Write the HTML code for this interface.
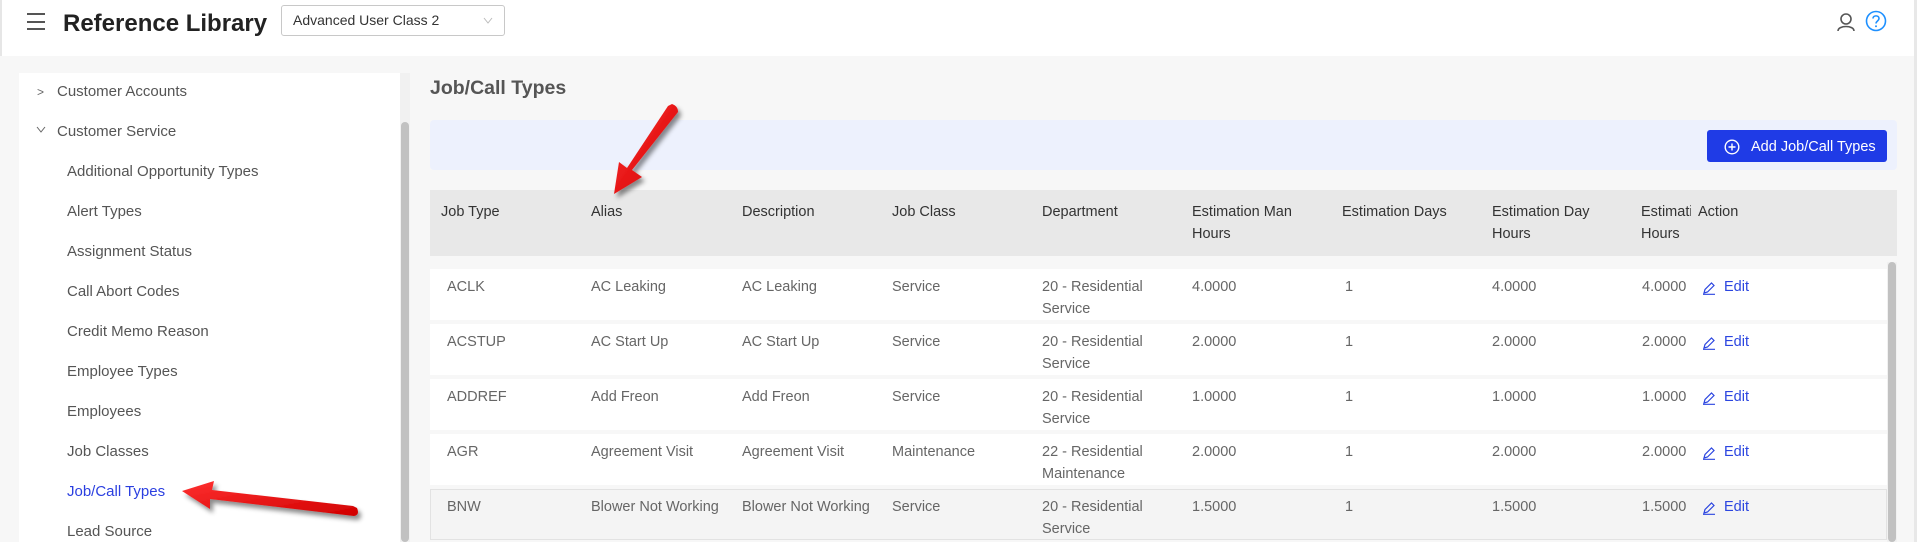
<!DOCTYPE html>
<html><head><meta charset="utf-8">
<style>
*{margin:0;padding:0;box-sizing:border-box}
body{width:1917px;height:542px;overflow:hidden;background:#f7f7f7;font-family:"Liberation Sans",Arial,sans-serif;position:relative}
.a{position:absolute;white-space:nowrap}
#hdr{position:absolute;left:0;top:0;width:1914px;height:56px;background:#fff;border-left:2px solid #e6e6e6}
.side{position:absolute;left:19px;top:73px;width:381px;height:469px;background:#fff}
.si{position:absolute;font-size:15px;color:#555;line-height:18px}
.th{position:absolute;font-size:14.5px;color:#333;line-height:22px}
.row{position:absolute;left:430px;width:1457px;height:51px;background:#fff}
.td{position:absolute;font-size:14.5px;color:#666;line-height:22px;white-space:nowrap}
.ed{position:absolute;font-size:14.5px;color:#2b45e0;line-height:22px}
</style></head><body>
<div id="hdr">
 <div class="a" style="left:25px;top:13px;width:18px;height:2px;background:#555"></div>
 <div class="a" style="left:25px;top:21px;width:18px;height:2px;background:#555"></div>
 <div class="a" style="left:25px;top:28px;width:18px;height:2px;background:#555"></div>
 <div class="a" style="left:61px;top:9px;font-size:24px;font-weight:bold;color:#222;line-height:30px">Reference Library</div>
 <div class="a" style="left:279px;top:5px;width:224px;height:31px;border:1px solid #c8c8c8;border-radius:3px"></div>
 <div class="a" style="left:291px;top:12px;font-size:14px;color:#333">Advanced User Class 2</div>
 <svg class="a" style="left:481px;top:17px" width="10" height="8"><path d="M1 1 L5 6 L9 1" fill="none" stroke="#bbb" stroke-width="1"/></svg>
 <svg class="a" style="left:1834px;top:12px" width="20" height="20"><circle cx="10" cy="7" r="5" fill="none" stroke="#555" stroke-width="1.6"/><path d="M2 19 C2 13 18 13 18 19" fill="none" stroke="#555" stroke-width="1.6"/></svg>
 <svg class="a" style="left:1863px;top:10px" width="22" height="22"><circle cx="11" cy="11" r="9.5" fill="none" stroke="#1e90ff" stroke-width="1.6"/><path d="M8 8.5 C8 5 14 5 14 8.5 C14 11 11 11 11 13.5" fill="none" stroke="#1e90ff" stroke-width="1.6"/><circle cx="11" cy="16.3" r="1" fill="#1e90ff"/></svg>
</div>
<div class="a" style="left:1914px;top:0;width:3px;height:542px;background:#e8e8e8"></div>

<div class="side"></div>
<div class="a" style="left:400px;top:73px;width:10px;height:469px;background:#f1f1f1"></div>
<div class="a" style="left:401px;top:122px;width:8px;height:420px;background:#c1c1c1;border-radius:4px"></div>
<div class="si" style="left:37px;top:83px;font-size:12px;color:#666">&gt;</div>
<div class="si" style="left:57px;top:83px">Customer Accounts</div>
<svg class="a" style="left:36px;top:126px" width="10" height="8"><path d="M1 1 L5 6 L9 1" fill="none" stroke="#666" stroke-width="1"/></svg>
<div class="si" style="left:57px;top:123px">Customer Service</div>
<div class="si" style="left:67px;top:163px">Additional Opportunity Types</div>
<div class="si" style="left:67px;top:203px">Alert Types</div>
<div class="si" style="left:67px;top:243px">Assignment Status</div>
<div class="si" style="left:67px;top:283px">Call Abort Codes</div>
<div class="si" style="left:67px;top:323px">Credit Memo Reason</div>
<div class="si" style="left:67px;top:363px">Employee Types</div>
<div class="si" style="left:67px;top:403px">Employees</div>
<div class="si" style="left:67px;top:443px">Job Classes</div>
<div class="si" style="left:67px;top:483px;color:#2b3fe0">Job/Call Types</div>
<div class="si" style="left:67px;top:523px">Lead Source</div>

<div class="a" style="left:430px;top:77px;font-size:19.5px;font-weight:bold;color:#555">Job/Call Types</div>
<div class="a" style="left:430px;top:120px;width:1467px;height:50px;background:#edf1fd;border-radius:4px"></div>
<div class="a" style="left:1707px;top:130px;width:180px;height:32px;background:#1f3be6;border-radius:3px"></div>
<svg class="a" style="left:1724px;top:139px" width="16" height="16"><circle cx="8" cy="8" r="6.8" fill="none" stroke="#fff" stroke-width="1.4"/><path d="M8 4.5V11.5M4.5 8H11.5" stroke="#fff" stroke-width="1.4"/></svg>
<div class="a" style="left:1751px;top:139px;font-size:14.5px;color:#fff">Add Job/Call Types</div>

<div class="a" style="left:430px;top:190px;width:1467px;height:66px;background:#e8e8e8"></div>
<div class="th" style="left:441px;top:201px">Job Type</div>
<div class="th" style="left:591px;top:201px">Alias</div>
<div class="th" style="left:742px;top:201px">Description</div>
<div class="th" style="left:892px;top:201px">Job Class</div>
<div class="th" style="left:1042px;top:201px">Department</div>
<div class="th" style="left:1192px;top:201px">Estimation Man<br>Hours</div>
<div class="th" style="left:1342px;top:201px">Estimation Days</div>
<div class="th" style="left:1492px;top:201px">Estimation Day<br>Hours</div>
<div class="th" style="left:1641px;top:201px;width:50px;overflow:hidden">Estimation<br>Hours</div>
<div class="th" style="left:1698px;top:201px">Action</div>

<div class="row" style="top:269px"></div>
<div class="row" style="top:324px"></div>
<div class="row" style="top:379px"></div>
<div class="row" style="top:434px"></div>
<div class="row" style="top:489px;background:#f4f4f4;border:1px solid #e2e2e2"></div>
<div class="a" style="left:1887px;top:262px;width:10px;height:280px;background:#f1f1f1"></div>
<div class="a" style="left:1888px;top:262px;width:8px;height:280px;background:#c1c1c1;border-radius:4px"></div>

<div id="rows"></div>
<script>
var d=[["ACLK","AC Leaking","AC Leaking","Service","20 - Residential<br>Service","4.0000"],
["ACSTUP","AC Start Up","AC Start Up","Service","20 - Residential<br>Service","2.0000"],
["ADDREF","Add Freon","Add Freon","Service","20 - Residential<br>Service","1.0000"],
["AGR","Agreement Visit","Agreement Visit","Maintenance","22 - Residential<br>Maintenance","2.0000"],
["BNW","Blower Not Working","Blower Not Working","Service","20 - Residential<br>Service","1.5000"]];
var h="";
d.forEach(function(r,i){var t=276+i*55;
var xs=[447,591,742,892,1042];
for(var j=0;j<5;j++)h+='<div class="td" style="left:'+xs[j]+'px;top:'+t+'px">'+r[j]+'</div>';
h+='<div class="td" style="left:1192px;top:'+t+'px">'+r[5]+'</div>';
h+='<div class="td" style="left:1345px;top:'+t+'px">1</div>';
h+='<div class="td" style="left:1492px;top:'+t+'px">'+r[5]+'</div>';
h+='<div class="td" style="left:1642px;top:'+t+'px">'+r[5]+'</div>';
h+='<svg class="a" style="left:1702px;top:'+(t+5)+'px" width="14" height="14"><path d="M2 12 L3 8.5 L9.5 2 L12 4.5 L5.5 11 Z M1 13.3 H13" fill="none" stroke="#2b45e0" stroke-width="1.2"/></svg>';
h+='<div class="ed" style="left:1724px;top:'+t+'px">Edit</div>';});
document.getElementById("rows").innerHTML=h;
</script>

<svg class="a" style="left:0;top:0;pointer-events:none" width="1917" height="542">
<defs><filter id="sh"><feDropShadow dx="3" dy="4" stdDeviation="2.5" flood-color="#000" flood-opacity="0.45"/></filter>
<linearGradient id="g" x1="0" y1="0" x2="1" y2="1"><stop offset="0" stop-color="#ff3030"/><stop offset="1" stop-color="#d00000"/></linearGradient></defs>
<g filter="url(#sh)" fill="url(#g)">
<path d="M672 104 Q678 106 678 112 L632 170 L642 177 L614 194 L619 162 L627 168 L668 106 Z"/>
<path d="M357 508 Q360 515 354 516 L210 499 L210 509 L182 491 L214 481 L212 490 L353 506 Z"/>
</g></svg>
</body></html>
